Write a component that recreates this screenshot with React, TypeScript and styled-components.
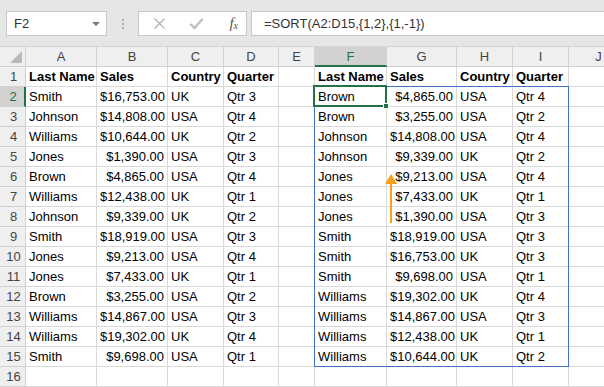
import styled, { createGlobalStyle } from 'styled-components'

const GlobalStyle = createGlobalStyle`
  html, body {
    margin: 0;
    padding: 0;
    background: #ffffff;
    overflow: hidden;
  }
  * {
    box-sizing: border-box;
  }
`

const COLS = [
  { name: 'A', width: 71 },
  { name: 'B', width: 71 },
  { name: 'C', width: 56 },
  { name: 'D', width: 55 },
  { name: 'E', width: 36 },
  { name: 'F', width: 72 },
  { name: 'G', width: 70 },
  { name: 'H', width: 56 },
  { name: 'I', width: 56 },
  { name: 'J', width: 60 }
]

const ROW_HEADER_W = 26
const HEADER_H = 20
const ROW_H = 20

type Row = [string, string, string, string]

const SOURCE: Row[] = [
  ['Smith', '$16,753.00', 'UK', 'Qtr 3'],
  ['Johnson', '$14,808.00', 'USA', 'Qtr 4'],
  ['Williams', '$10,644.00', 'UK', 'Qtr 2'],
  ['Jones', '$1,390.00', 'USA', 'Qtr 3'],
  ['Brown', '$4,865.00', 'USA', 'Qtr 4'],
  ['Williams', '$12,438.00', 'UK', 'Qtr 1'],
  ['Johnson', '$9,339.00', 'UK', 'Qtr 2'],
  ['Smith', '$18,919.00', 'USA', 'Qtr 3'],
  ['Jones', '$9,213.00', 'USA', 'Qtr 4'],
  ['Jones', '$7,433.00', 'UK', 'Qtr 1'],
  ['Brown', '$3,255.00', 'USA', 'Qtr 2'],
  ['Williams', '$14,867.00', 'USA', 'Qtr 3'],
  ['Williams', '$19,302.00', 'UK', 'Qtr 4'],
  ['Smith', '$9,698.00', 'USA', 'Qtr 1']
]

const SORTED: Row[] = [
  ['Brown', '$4,865.00', 'USA', 'Qtr 4'],
  ['Brown', '$3,255.00', 'USA', 'Qtr 2'],
  ['Johnson', '$14,808.00', 'USA', 'Qtr 4'],
  ['Johnson', '$9,339.00', 'UK', 'Qtr 2'],
  ['Jones', '$9,213.00', 'USA', 'Qtr 4'],
  ['Jones', '$7,433.00', 'UK', 'Qtr 1'],
  ['Jones', '$1,390.00', 'USA', 'Qtr 3'],
  ['Smith', '$18,919.00', 'USA', 'Qtr 3'],
  ['Smith', '$16,753.00', 'UK', 'Qtr 3'],
  ['Smith', '$9,698.00', 'USA', 'Qtr 1'],
  ['Williams', '$19,302.00', 'UK', 'Qtr 4'],
  ['Williams', '$14,867.00', 'USA', 'Qtr 3'],
  ['Williams', '$12,438.00', 'UK', 'Qtr 1'],
  ['Williams', '$10,644.00', 'UK', 'Qtr 2']
]

const HEADINGS: Row = ['Last Name', 'Sales', 'Country', 'Quarter']

type CellData = { text: string; bold?: boolean; right?: boolean }

const buildRows = (): CellData[][] => {
  const rows: CellData[][] = []
  const blank = { text: '' }
  const toCells = (r: Row, bold = false): CellData[] =>
    r.map((t, i) => ({ text: t, bold, right: i === 1 && !bold }))
  rows.push([...toCells(HEADINGS, true), blank, ...toCells(HEADINGS, true), blank])
  for (let i = 0; i < 14; i++) {
    rows.push([...toCells(SOURCE[i]), blank, ...toCells(SORTED[i]), blank])
  }
  rows.push(COLS.map(() => blank))
  return rows
}

const colLeft = (index: number) =>
  ROW_HEADER_W + COLS.slice(0, index).reduce((s, c) => s + c.width, 0)

const App = () => {
  const rows = buildRows()
  const template = `${ROW_HEADER_W}px ${COLS.map(c => `${c.width}px`).join(' ')}`

  const spillLeft = colLeft(5) - 1
  const spillRight = colLeft(9) - 1
  const spillTop = HEADER_H + ROW_H - 1
  const spillBottom = HEADER_H + ROW_H * 15 - 1

  return (
    <>
      <GlobalStyle />
      <Window>
        <FormulaBar>
          <NameBox>
            <span>F2</span>
            <DropArrow />
          </NameBox>
          <Grip>
            <i />
            <i />
            <i />
          </Grip>
          <FxButtons>
            <BarIcon width="13" height="13" viewBox="0 0 13 13">
              <path d="M1.5 1.5 L11.5 11.5 M11.5 1.5 L1.5 11.5" stroke="#b4b4b4" strokeWidth="1.4" fill="none" />
            </BarIcon>
            <BarIcon width="15" height="13" viewBox="0 0 15 13">
              <path d="M1.5 7 L5.5 11 L13.5 2" stroke="#bdbdbd" strokeWidth="2.4" fill="none" />
            </BarIcon>
            <FxLabel>
              f<sub>x</sub>
            </FxLabel>
          </FxButtons>
          <FormulaInput>=SORT(A2:D15,{'{'}1,2{'}'},{'{'}1,-1{'}'})</FormulaInput>
        </FormulaBar>

        <Sheet style={{ gridTemplateColumns: template }}>
          <Corner>
            <svg width="12" height="12" viewBox="0 0 12 12">
              <polygon points="12,0 12,12 0,12" fill="#b9b9b9" />
            </svg>
          </Corner>
          {COLS.map(c => (
            <ColHeader key={c.name} $active={c.name === 'F'}>
              {c.name}
            </ColHeader>
          ))}

          {rows.map((cells, r) => (
            <RowGroup key={r}>
              <RowHeader $active={r === 1}>{r + 1}</RowHeader>
              {cells.map((cell, c) => (
                <Cell key={c} $bold={cell.bold} $right={cell.right}>
                  {cell.text}
                </Cell>
              ))}
            </RowGroup>
          ))}

          <SpillBox
            style={{
              left: spillLeft,
              top: spillTop,
              width: spillRight - spillLeft + 1,
              height: spillBottom - spillTop + 1
            }}
          />
          <ActiveCell
            style={{
              left: spillLeft - 1,
              top: spillTop - 1,
              width: COLS[5].width + 2,
              height: ROW_H + 2
            }}>
            <Handle />
          </ActiveCell>
          <Arrow style={{ left: 384, top: 127 }}>
            <svg width="14" height="50" viewBox="0 0 14 50">
              <polygon points="7,0 13,10 1,10" fill="#f7a11a" />
              <rect x="6" y="8" width="2" height="41" fill="#f7a11a" />
            </svg>
          </Arrow>
        </Sheet>
      </Window>
    </>
  )
}

export default App

const Window = styled.div`
  width: 604px;
  height: 387px;
  overflow: hidden;
  background: #ffffff;
  font-family: 'Liberation Sans', Arial, sans-serif;
`

const FormulaBar = styled.div`
  height: 47px;
  background: #e6e6e6;
  display: flex;
  align-items: flex-start;
  padding: 11px 0 0 6px;
  border-bottom: 1px solid #d4d4d4;
`

const NameBox = styled.div`
  width: 101px;
  height: 25px;
  background: #ffffff;
  border: 1px solid #c6c6c6;
  display: flex;
  align-items: center;
  justify-content: space-between;
  padding: 0 6px 0 7px;
  font-size: 13px;
  color: #333333;
`

const DropArrow = styled.span`
  width: 0;
  height: 0;
  border-left: 4px solid transparent;
  border-right: 4px solid transparent;
  border-top: 4px solid #7a7a7a;
`

const Grip = styled.div`
  width: 31px;
  height: 25px;
  display: flex;
  flex-direction: column;
  align-items: center;
  justify-content: center;
  gap: 2px;

  & i {
    display: block;
    width: 2px;
    height: 2px;
    background: #b0b0b0;
  }
`

const FxButtons = styled.div`
  width: 109px;
  height: 25px;
  background: #ffffff;
  border: 1px solid #c6c6c6;
  display: flex;
  align-items: center;
  padding: 0 8px 0 14px;
  gap: 23px;
`

const BarIcon = styled.svg`
  display: block;
  flex: none;
`

const FxLabel = styled.span`
  margin-left: auto;
  font-family: 'Liberation Serif', 'Times New Roman', serif;
  font-style: italic;
  font-size: 15px;
  color: #555555;
  line-height: 1;

  & sub {
    font-size: 10px;
    vertical-align: -1px;
  }
`

const FormulaInput = styled.div`
  flex: 1;
  height: 25px;
  margin-left: 4px;
  background: #ffffff;
  border: 1px solid #c6c6c6;
  border-right: none;
  display: flex;
  align-items: center;
  padding-left: 12px;
  font-size: 13px;
  color: #333333;
`

const Sheet = styled.div`
  position: relative;
  display: grid;
  grid-auto-rows: ${ROW_H}px;
  grid-template-rows: ${HEADER_H}px;
  font-size: 13px;
`

const RowGroup = styled.div`
  display: contents;
`

const headerBase = `
  background: #efefef;
  color: #444444;
  display: flex;
  align-items: center;
  justify-content: center;
  border-right: 1px solid #d0d0d0;
  border-bottom: 1px solid #d0d0d0;
  font-size: 13px;
`

const Corner = styled.div`
  ${headerBase}
  align-items: flex-end;
  justify-content: flex-end;
  padding: 0 3px 3px 0;
`

const ColHeader = styled.div<{ $active?: boolean }>`
  ${headerBase}
  background: ${({ $active }) => ($active ? '#d2d2d2' : '#efefef')};
  color: ${({ $active }) => ($active ? '#217346' : '#444444')};
  border-bottom: ${({ $active }) => ($active ? '2px solid #217346' : '1px solid #d0d0d0')};
`

const RowHeader = styled.div<{ $active?: boolean }>`
  ${headerBase}
  background: ${({ $active }) => ($active ? '#d2d2d2' : '#efefef')};
  color: ${({ $active }) => ($active ? '#217346' : '#444444')};
  border-right: ${({ $active }) => ($active ? '2px solid #217346' : '1px solid #d0d0d0')};
  padding-left: 2px;
`

const Cell = styled.div<{ $bold?: boolean; $right?: boolean }>`
  border-right: 1px solid #d9d9d9;
  border-bottom: 1px solid #d9d9d9;
  padding: 1px 3px 0 3px;
  line-height: 18px;
  white-space: nowrap;
  overflow: visible;
  color: #000000;
  font-weight: ${({ $bold }) => ($bold ? 700 : 400)};
  text-align: ${({ $right }) => ($right ? 'right' : 'left')};
`

const SpillBox = styled.div`
  position: absolute;
  border: 1px solid #4472c4;
  pointer-events: none;
`

const ActiveCell = styled.div`
  position: absolute;
  border: 2px solid #217346;
  pointer-events: none;
`

const Handle = styled.span`
  position: absolute;
  right: -4px;
  bottom: -4px;
  width: 6px;
  height: 6px;
  background: #217346;
  border: 1px solid #ffffff;
`

const Arrow = styled.div`
  position: absolute;
  pointer-events: none;
  line-height: 0;
`
